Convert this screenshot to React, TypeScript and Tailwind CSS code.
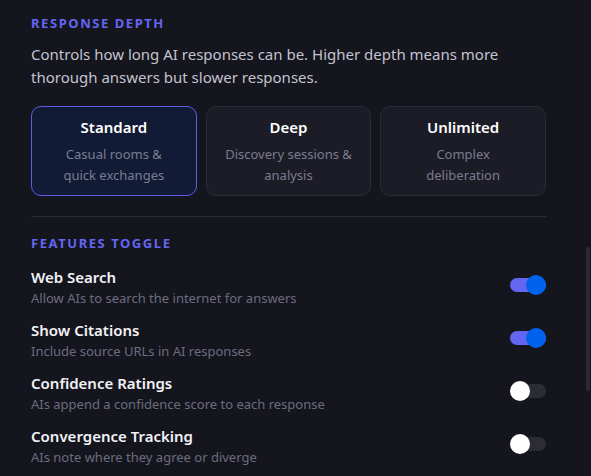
import { useState } from 'react';

type Depth = 'standard' | 'deep' | 'unlimited';

const depths: { key: Depth; title: string; lines: [string, string] }[] = [
  { key: 'standard', title: 'Standard', lines: ['Casual rooms &', 'quick exchanges'] },
  { key: 'deep', title: 'Deep', lines: ['Discovery sessions &', 'analysis'] },
  { key: 'unlimited', title: 'Unlimited', lines: ['Complex', 'deliberation'] },
];

const features = [
  { key: 'web', title: 'Web Search', desc: 'Allow AIs to search the internet for answers', on: true },
  { key: 'cite', title: 'Show Citations', desc: 'Include source URLs in AI responses', on: true },
  { key: 'conf', title: 'Confidence Ratings', desc: 'AIs append a confidence score to each response', on: false },
  { key: 'conv', title: 'Convergence Tracking', desc: 'AIs note where they agree or diverge', on: false },
];

function Toggle({ on, onClick }: { on: boolean; onClick: () => void }) {
  return (
    <button
      type="button"
      onClick={onClick}
      className="relative mt-[8px] flex h-5 w-9 shrink-0 items-center"
    >
      <span className={`h-3.5 w-9 rounded-full ${on ? 'bg-[#6366f1]' : 'bg-[#2c2c36]'}`} />
      <span
        className={`absolute top-0 h-5 w-5 rounded-full ${
          on ? 'left-4 bg-[#0062ec]' : 'left-0 bg-white'
        }`}
      />
    </button>
  );
}

export default function App() {
  const [depth, setDepth] = useState<Depth>('standard');
  const [flags, setFlags] = useState<Record<string, boolean>>(
    Object.fromEntries(features.map((f) => [f.key, f.on])),
  );

  return (
    <div
      className="relative h-[476px] w-[591px] overflow-hidden bg-[#15151d] pl-[31px] pr-[45px] pt-[14px]"
      style={{ fontFamily: '"Noto Sans", sans-serif' }}
    >
      <h2 className="text-[13px] font-bold uppercase leading-[18px] tracking-[0.12em] text-[#6366f1]">
        Response Depth
      </h2>
      <p className="mt-[11px] text-[15px] leading-[23px] text-[#c3c3d0]">
        Controls how long AI responses can be. Higher depth means more thorough answers but slower
        responses.
      </p>

      <div className="mt-[17px] grid grid-cols-3 gap-[9px]">
        {depths.map((d) => (
          <button
            key={d.key}
            type="button"
            onClick={() => setDepth(d.key)}
            className={`flex h-[90px] flex-col items-center rounded-[10px] border px-2 pt-[10px] text-center ${
              depth === d.key
                ? 'border-[#5b5ee6] bg-[#111b35]'
                : 'border-[#2b2b35] bg-[#1c1c26]'
            }`}
          >
            <span className="text-[15px] font-semibold leading-[20px] text-white">{d.title}</span>
            <span className="mt-[7px] text-[13px] leading-[21px] text-[#7b7b90]">
              {d.lines[0]}
              <br />
              {d.lines[1]}
            </span>
          </button>
        ))}
      </div>

      <div className="mt-[20px] h-px bg-[#2b2b33]" />

      <h2 className="mt-[17px] text-[13px] font-bold uppercase leading-[18px] tracking-[0.12em] text-[#6366f1]">
        Features Toggle
      </h2>

      <div className="mt-[15px] flex flex-col gap-[11px]">
        {features.map((f) => (
          <div key={f.key} className="flex items-start justify-between">
            <div className="flex flex-col">
              <span className="text-[15px] font-semibold leading-[21px] text-[#f2f2f7]">{f.title}</span>
              <span className="text-[13px] leading-[21px] text-[#6c6c80]">{f.desc}</span>
            </div>
            <Toggle
              on={flags[f.key]}
              onClick={() => setFlags((s) => ({ ...s, [f.key]: !s[f.key] }))}
            />
          </div>
        ))}
      </div>

      <div className="absolute right-[1px] top-[247px] h-[144px] w-[4px] rounded-full bg-[#2a2a33]" />
    </div>
  );
}
